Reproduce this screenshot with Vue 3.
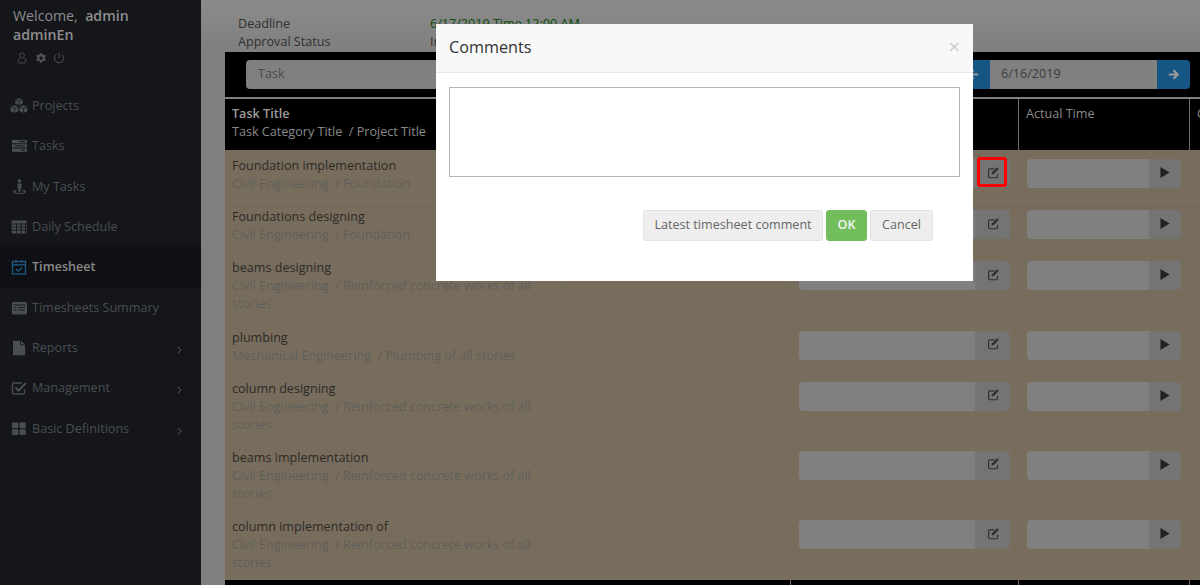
<template>
  <div class="page">
    <aside class="sidebar">
      <div class="welcome">
        <div>Welcome, &nbsp;<b>admin</b></div>
        <div><b>adminEn</b></div>
        <div class="tools">
          <svg viewBox="0 0 16 16" width="12" height="12"><path d="M8 1.200c-1.900 0-3.100 1.300-3.100 3.200S6.100 8 8 8s3.100-1.700 3.100-3.600S9.900 1.200 8 1.200z" class="line"/><path d="M5.300 8.500C3.500 8.800 3 10 3 11.500v1.500c0 1 .6 1.600 1.600 1.600h6.800c1 0 1.600-.6 1.600-1.600v-1.500c0-1.500-.5-2.700-2.300-3" class="line"/></svg>
          <svg viewBox="0 0 16 16" width="12" height="12"><path d="M6.600 1.500h2.800l.4 1.800 1.600.8 1.800-.7 1.300 2.300-1.400 1.300v1.800l1.400 1.300-1.300 2.300-1.800-.7-1.600.8-.4 1.800H6.600l-.4-1.800-1.600-.8-1.800.7-1.300-2.300 1.400-1.300V7L1.500 5.700l1.300-2.300 1.800.7 1.600-.8z" class="fill"/><circle cx="8" cy="8" r="2.200" fill="#14161a"/></svg>
          <svg viewBox="0 0 16 16" width="12" height="12"><path d="M4.500 3.500a6 6 0 1 0 7 0M8 1v7" class="line"/></svg>
        </div>
      </div>
      <nav class="nav">
        <div v-for="item in menu" :key="item.label" class="nav-item" :class="{ active: item.active }">
          <svg class="nav-icon" viewBox="0 0 18 16" width="18" height="16" v-html="item.icon"></svg>
          <span>{{ item.label }}</span>
          <svg v-if="item.more" class="chev" viewBox="0 0 6 10" width="5" height="8"><path d="M1 1l4 4-4 4" fill="none" stroke="#4a4d52" stroke-width="1.300"/></svg>
        </div>
      </nav>
    </aside>

    <main class="content">
      <div class="facts">
        <div class="fact"><span class="fact-label">Deadline</span><span class="deadline">6/17/2019 Time 12:00 AM</span></div>
        <div class="fact"><span class="fact-label">Approval Status</span><span>In</span></div>
      </div>

      <div class="filter">
        <div class="filter-task">Task</div>
        <div class="filter-date">
          <span class="blue-btn left"><svg viewBox="0 0 14 14" width="13" height="13"><path d="M12 7H3M7 2.500L2.500 7 7 11.500" class="arrow"/></svg></span>
          <span class="date-value">6/16/2019</span>
          <span class="blue-btn right"><svg viewBox="0 0 14 14" width="13" height="13"><path d="M2 7h9M7 2.500L11.500 7 7 11.500" class="arrow"/></svg></span>
        </div>
      </div>

      <div class="grid head">
        <div class="cell"><strong>Task Title</strong><div>Task Category Title &nbsp;/ Project Title</div></div>
        <div class="cell"></div>
        <div class="cell"></div>
        <div class="cell"><span>Actual Time</span></div>
        <div class="cell"><span>C</span></div>
      </div>

      <div v-for="task in tasks" :key="task.title" class="grid row">
        <div class="cell task">
          <div class="task-title">{{ task.title }}</div>
          <div class="task-sub">{{ task.category }} &nbsp;/ {{ task.project }}</div>
        </div>
        <div class="cell"></div>
        <div class="cell inputs">
          <div class="input-group wide">
            <span class="field"></span>
            <span class="addon">
              <svg viewBox="0 0 16 16" width="13" height="13"><path d="M13 9.500V13a1.500 1.500 0 0 1-1.500 1.500h-8A1.500 1.500 0 0 1 2 13V5a1.500 1.500 0 0 1 1.500-1.500H9" fill="none" stroke="#2e2e2e" stroke-width="1.400"/><path d="M6 8l6.500-6.500 2 2L8 10l-2.300.3z" fill="#2e2e2e"/></svg>
            </span>
          </div>
        </div>
        <div class="cell inputs">
          <div class="input-group narrow">
            <span class="field"></span>
            <span class="addon play"><svg viewBox="0 0 10 12" width="10" height="11"><path d="M0 0l10 6-10 6z" fill="#222"/></svg></span>
          </div>
        </div>
        <div class="cell"></div>
      </div>
      <div class="grid table-end">
        <div class="cell"></div>
        <div class="cell"></div>
        <div class="cell"></div>
        <div class="cell"></div>
        <div class="cell"></div>
      </div>
    </main>

    <div class="highlight"></div>

    <section class="modal">
      <header class="modal-head">
        <h2>Comments</h2>
        <span class="close">×</span>
      </header>
      <div class="modal-body">
        <div class="textarea"></div>
        <div class="actions">
          <button class="btn tight">Latest timesheet comment</button>
          <button class="btn tight ok">OK</button>
          <button class="btn">Cancel</button>
        </div>
      </div>
    </section>
  </div>
</template>

<script setup>
const menu = [
  { label: 'Projects', icon: '<g fill="#4a4d52" stroke="#14161a" stroke-width=".6"><path d="M9 0l4 1.500v4.300L9 7.500 5 5.800V1.500z"/><path d="M4.500 7L8.700 8.600v4.900L4.500 15.300.3 13.500V8.600z"/><path d="M13.500 7l4.200 1.600v4.900l-4.200 1.800-4.200-1.800V8.600z"/></g><path d="M5.500 1.800L9 3.200l3.500-1.400M9 3.200v4M1 9l3.500 1.400L8 9M4.500 10.400v4.500M10 9l3.500 1.400L17 9M13.500 10.400v4.500" fill="none" stroke="#14161a" stroke-width=".8"/>' },
  { label: 'Tasks', icon: '<g fill="#4a4d52"><rect x="2" y="2" width="15" height="3.300"/><rect x="2" y="6.300" width="15" height="3.300"/><rect x="2" y="10.600" width="15" height="3.300"/></g><path d="M9 3.600h6M5 8h10M11 12.200h4" stroke="#14161a"/>' },
  { label: 'My Tasks', icon: '<g fill="#4a4d52"><circle cx="9.500" cy="2" r="1.800"/><path d="M7.500 4.500h4v5h-1v3.500h-2V9.500h-1z"/><path d="M6.500 10.500C4 11 3 12 3 13s3 2 6.500 2 6.500-1 6.500-2-1-2-3.500-2.500V12c1 .2 1.800.6 1.800 1 0 .5-2 1-4.800 1s-4.800-.5-4.800-1c0-.4.800-.8 1.800-1z"/></g>' },
  { label: 'Daily Schedule', icon: '<path fill="#4a4d52" d="M2.500 1.500h13.500a.8.800 0 0 1 .8.800v11.400a.8.800 0 0 1-.8.800H2.500a.8.800 0 0 1-.8-.8V2.300a.8.800 0 0 1 .8-.8z"/><path d="M2 5h15M2 8h15M2 11h15M6.500 4v10M11 4v10M15.500 4v10" stroke="#14161a" stroke-width=".9"/>' },
  { label: 'Timesheet', active: true, icon: '<g fill="none" stroke="#1c5b86" stroke-width="1.300"><rect x="2.500" y="2.500" width="13" height="12.500"/><path d="M2.500 5.800h13"/><path d="M6 .8v3M12 .8v3"/><path d="M6 10l2.200 2.200L12 8.500"/></g>' },
  { label: 'Timesheets Summary', icon: '<rect x="2" y="2" width="15" height="12.500" rx="1.500" fill="#4a4d52"/><path d="M3.200 5h12.600" stroke="#14161a"/><path d="M4 7.500h2.500M8 7.500h7M4 10h2.500M8 10h7" stroke="#14161a" stroke-width=".9"/>' },
  { label: 'Reports', more: true, icon: '<path fill="#4a4d52" d="M3 .8h7v4.500h5v10H3z"/><path fill="#4a4d52" d="M11 .8l4 3.600h-4z"/>' },
  { label: 'Management', more: true, icon: '<path fill="none" stroke="#4a4d52" stroke-width="1.400" d="M14.500 9v3.500a1.500 1.500 0 0 1-1.500 1.500H4a1.500 1.500 0 0 1-1.500-1.500V4.500A1.500 1.500 0 0 1 4 3h8"/><path fill="none" stroke="#4a4d52" stroke-width="2" d="M5.500 7.500l3 3L16 3"/>' },
  { label: 'Basic Definitions', more: true, icon: '<g fill="#4a4d52"><rect x="2" y="1.500" width="6.300" height="5.700" rx=".7"/><rect x="9.500" y="1.500" width="6.300" height="5.700" rx=".7"/><rect x="2" y="8.300" width="6.300" height="5.700" rx=".7"/><rect x="9.500" y="8.300" width="6.300" height="5.700" rx=".7"/></g>' }
]

const civil = 'Civil Engineering'
const concrete = 'Reinforced concrete works of all stories'
const tasks = [
  { title: 'Foundation implementation', category: civil, project: 'Foundation' },
  { title: 'Foundations designing', category: civil, project: 'Foundation' },
  { title: 'beams designing', category: civil, project: concrete },
  { title: 'plumbing', category: 'Mechanical Engineering', project: 'Plumbing of all stories' },
  { title: 'column designing', category: civil, project: concrete },
  { title: 'beams implementation', category: civil, project: concrete },
  { title: 'column implementation of', category: civil, project: concrete }
]
</script>

<style>
html, body { margin: 0; background: #7f7f7f; }
</style>

<style scoped>
.page {
  width: 1200px;
  height: 585px;
  position: relative;
  overflow: hidden;
  display: flex;
  font-family: "Open Sans", "Noto Sans", sans-serif;
  font-size: 12.600px;
  line-height: 18px;
  color: #3a3a3a;
  background: linear-gradient(#8b8b8b, #7f7f7f 52px);
}

/* sidebar */
.sidebar { width: 201px; flex: none; background: #14161a; color: #8d8d8d; }
.welcome { padding: 6px 13px 0; height: 79px; box-sizing: border-box; font-size: 14.200px; line-height: 19px; }
.welcome b { font-weight: 600; }
.tools { display: flex; gap: 6.500px; padding: 8px 0 0 3px; }
.line { fill: none; stroke: #4f5155; stroke-width: 1.300; }
.fill { fill: #4f5155; }
.nav { padding-top: 7px; }
.nav-item { height: 40.330px; display: flex; align-items: center; padding: 0 19px 0 10px; color: #4a4d52; }
.nav-item span { margin-left: 4px; flex: 1; }
.nav-item.active { background: #0f1013; color: #8a8a8a; font-weight: 600; }
.chev { margin-top: 4px; }

/* main */
.content { flex: 1; min-width: 0; padding: 15px 0 0 24px; }
.facts { padding-left: 13px; height: 37px; }
.fact { display: flex; height: 18px; color: #303030; }
.fact-label { width: 192px; }
.deadline { color: #0b4d0b; }

.filter {
  height: 45px;
  background: #000;
  display: flex;
  justify-content: space-between;
  align-items: flex-start;
  padding: 8px 10px 0 21px;
  box-sizing: border-box;
}
.filter-task { width: 300px; height: 29px; line-height: 27px; background: #808080; border-radius: 4px 0 0 4px; padding-left: 12px; color: #4a4a4a; }
.filter-date { display: flex; height: 29px; line-height: 27px; }
.date-value { width: 167px; box-sizing: border-box; padding-left: 11px; background: #808080; color: #3c3c3c; }
.blue-btn { width: 33px; display: flex; align-items: center; justify-content: center; background: #165684; }
.blue-btn.right { border-radius: 0 4px 4px 0; }
.arrow { fill: none; stroke: #9a9a9a; stroke-width: 2.400; }

.grid { display: grid; grid-template-columns: 339px 227px 228px 171px 1fr; }
.head { margin-top: 2px; background: #000; color: #8a8a8a; height: 51px; }
.head .cell { padding: 6px 7px 4px; border-right: 1px solid #6e6e6e; }
.head .cell:nth-child(-n+2) { border-right-color: transparent; }
.head strong { font-weight: 600; color: #9c9c9c; }
.head > .cell:last-child { border-right: 0; }

.row { background: #786d5d; border-bottom: 1px solid #7c7164; }
.row .cell { border-right: 1px solid #706a60; }
.row .cell:last-child { border-right: 0; }
.task { padding: 7px 7px 7.200px; min-width: 0; }
.task-title { color: #2c2a26; }
.task-sub { color: #5f5f5a; width: 310px; }
.inputs { padding-top: 9px; padding-left: 8px; }
.input-group { display: flex; height: 29px; border-radius: 4px; overflow: hidden; }
.wide { width: 211px; }
.narrow { width: 154px; }
.field { flex: 1; background: #808080; }
.addon { width: 35px; padding: 0 0 3px 1px; box-sizing: border-box; display: flex; align-items: center; justify-content: center; background: #747474; }
.addon.play { width: 32px; padding: 0 0 2px; }
.table-end { height: 5px; background: #000; }
.table-end .cell { border-right: 1px solid #706a60; }
.table-end .cell:first-child, .table-end .cell:last-child { border-right: 0; }

/* overlays */
.highlight {
  position: absolute;
  left: 977px;
  top: 157px;
  width: 24px;
  height: 24px;
  border: 3px solid #fe0000;
  border-radius: 3px;
}
.modal {
  position: absolute;
  left: 436px;
  top: 24px;
  width: 537px;
  height: 257px;
  background: #fff;
  color: #333;
}
.modal-head {
  height: 49px;
  box-sizing: border-box;
  padding: 0 13px 2px;
  display: flex;
  align-items: center;
  justify-content: space-between;
  background: #f8f8f8;
  border-bottom: 1px solid #e8e8e8;
}
.modal-head h2 { margin: 0; font-size: 16.200px; font-weight: 500; }
.close { font-size: 20px; color: #c8c8c8; }
.modal-body { padding: 14px 13px; }
.textarea { height: 88px; width: 509px; border: 1px solid #b5b5b5; }
.actions { display: flex; gap: 3px; justify-content: flex-end; padding: 33px 27px 0 0; }
.btn {
  height: 31px;
  padding: 0 11px 2px;
  border: 1px solid #e2e2e2;
  border-radius: 3px;
  background: #eee;
  color: #666;
  font: inherit;
}
.btn.tight { padding: 0 10.500px 2px; }
.btn.ok { background: #73be5c; border-color: #73be5c; color: #f2f2f2; font-weight: 600; }
</style>
